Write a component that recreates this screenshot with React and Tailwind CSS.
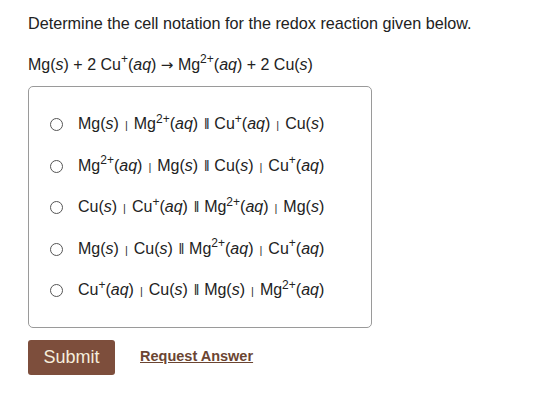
import React from 'react';

const Bar = () => <span className="mx-[6px] text-[11px] text-[#333]">|</span>;
const DBar = () => <span className="mx-[6px] text-[14px] tracking-[-1px] text-[#333]">ll</span>;
const Sup = ({ children }) => <sup className="text-[12px] top-[-0.55em]">{children}</sup>;
const I = ({ children }) => <i>{children}</i>;

const Mg = () => <>Mg(<I>s</I>)</>;
const Cu = () => <>Cu(<I>s</I>)</>;
const Mg2 = () => <>Mg<Sup>2+</Sup>(<I>aq</I>)</>;
const Cu1 = () => <>Cu<Sup>+</Sup>(<I>aq</I>)</>;

const options = [
  [Mg, Mg2, Cu1, Cu],
  [Mg2, Mg, Cu, Cu1],
  [Cu, Cu1, Mg2, Mg],
  [Mg, Cu, Mg2, Cu1],
  [Cu1, Cu, Mg, Mg2],
];

export default function App() {
  return (
    <div className="w-[542px] h-[413px] bg-white text-[#222] font-['Liberation_Sans',Arial,sans-serif] text-[16px] px-[28px] pt-[13px]">
      <p className="leading-[20px] text-[16.2px]">Determine the cell notation for the redox reaction given below.</p>
      <p className="mt-[22px] leading-[20px]">
        Mg(<I>s</I>) + 2 Cu<Sup>+</Sup>(<I>aq</I>){' '}
        <span className="font-['DejaVu_Sans',sans-serif] text-[15px] leading-[20px]">→</span>{' '}
        Mg<Sup>2+</Sup>(<I>aq</I>) + 2 Cu(<I>s</I>)
      </p>
      <div className="mt-[11px] w-[344px] border border-[#9a9a9a] rounded-[5px] pt-[17px] pb-[15px] pl-[21px]">
        {options.map(([A, B, C, D], i) => (
          <label key={i} className="flex items-center h-[41.5px]">
            <span className="w-[13px] h-[13px] rounded-full border border-[#555] shrink-0" />
            <span className="ml-[15px] leading-[20px]">
              <A /><Bar /><B /><DBar /><C /><Bar /><D />
            </span>
          </label>
        ))}
      </div>
      <div className="mt-[12px] flex items-center">
        <button className="w-[87px] h-[35px] rounded-[3px] bg-[#7d4e3c] text-[#f6eedd] text-[18px]">Submit</button>
        <a className="ml-[25px] text-[14.5px] font-bold underline text-[#6b4532]">Request Answer</a>
      </div>
    </div>
  );
}
